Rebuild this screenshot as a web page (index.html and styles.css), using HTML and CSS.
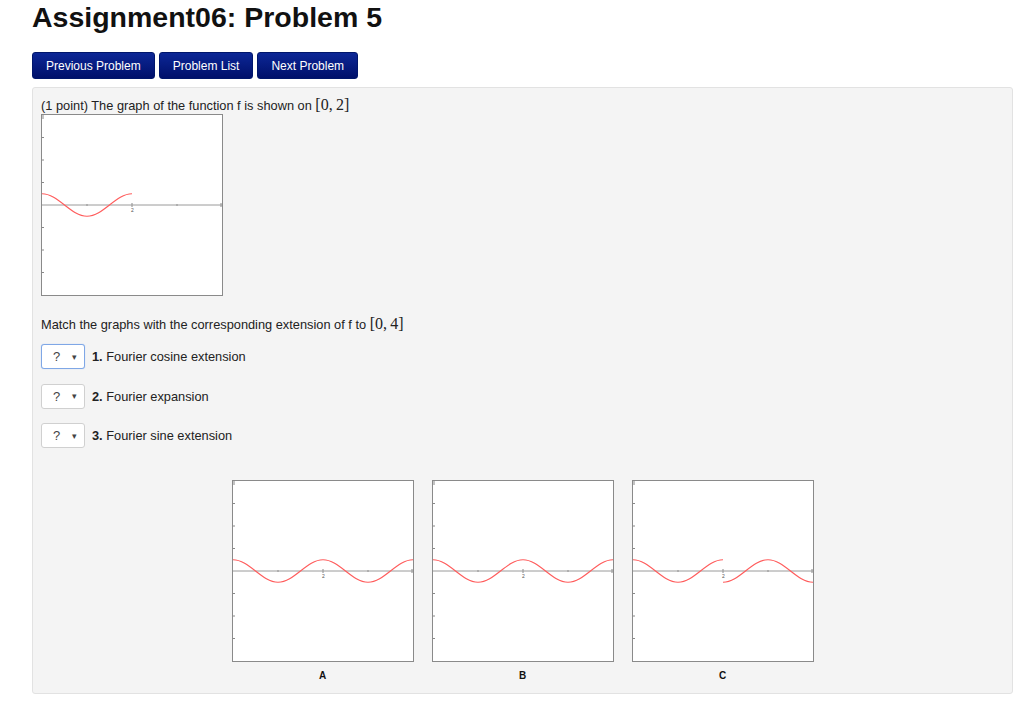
FILE: index.html
```html
<!DOCTYPE html>
<html lang="en">
<head>
    <meta charset="UTF-8">
    <title>Assignment06: Problem 5</title>
    <link rel="stylesheet" href="styles.css">
</head>
<body>
    <h1 class="title">Assignment06: Problem 5</h1>
    <div class="nav">
        <a class="btn" href="#">Previous Problem</a>
        <a class="btn" href="#">Problem List</a>
        <a class="btn" href="#">Next Problem</a>
    </div>
    <div class="problem">
        <p class="line">(1 point) The graph of the function f is shown on <span class="math">[0,&thinsp;2]</span></p>
        <div class="graph">
            <svg width="180" height="180" viewBox="0 0 180 180">
                <g class="ticks">
                    <path d="M0,22.5h2M0,45h2M0,67.5h2M0,112.5h2M0,135h2M0,157.5h2M45,89v2M90,88v4M135,89v2M179,88v4M1,0v4"/>
                </g>
                <line class="axis" x1="0" y1="90" x2="180" y2="90"/>
                <text class="tl" x="89" y="97">2</text>
                <path class="curve" d="M0,78.75 C16.35,78.75 28.65,101.25 45,101.25 S73.65,78.75 90,78.75"/>
            </svg>
        </div>
        <p class="line match">Match the graphs with the corresponding extension of f to <span class="math">[0,&thinsp;4]</span></p>
        <div class="answers">
            <div class="row">
                <span class="sel focus">?<span class="arrow">&#9662;</span></span>
                <span class="label"><b>1.</b> Fourier cosine extension</span>
            </div>
            <div class="row">
                <span class="sel">?<span class="arrow">&#9662;</span></span>
                <span class="label"><b>2.</b> Fourier expansion</span>
            </div>
            <div class="row">
                <span class="sel">?<span class="arrow">&#9662;</span></span>
                <span class="label"><b>3.</b> Fourier sine extension</span>
            </div>
        </div>
        <div class="choices">
            <div class="choice">
                <div class="graph">
                    <svg width="180" height="180" viewBox="0 0 180 180">
                        <g class="ticks">
                            <path d="M0,22.5h2M0,45h2M0,67.5h2M0,112.5h2M0,135h2M0,157.5h2M45,89v2M90,88v4M135,89v2M179,88v4M1,0v4"/>
                        </g>
                        <line class="axis" x1="0" y1="90" x2="180" y2="90"/>
                        <text class="tl" x="89" y="97">2</text>
                        <path class="curve" d="M0,78.75 C16.35,78.75 28.65,101.25 45,101.25 S73.65,78.75 90,78.75 S118.65,101.25 135,101.25 S163.65,78.75 180,78.75"/>
                    </svg>
                </div>
                <div class="letter">A</div>
            </div>
            <div class="choice">
                <div class="graph">
                    <svg width="180" height="180" viewBox="0 0 180 180">
                        <g class="ticks">
                            <path d="M0,22.5h2M0,45h2M0,67.5h2M0,112.5h2M0,135h2M0,157.5h2M45,89v2M90,88v4M135,89v2M179,88v4M1,0v4"/>
                        </g>
                        <line class="axis" x1="0" y1="90" x2="180" y2="90"/>
                        <text class="tl" x="89" y="97">2</text>
                        <path class="curve" d="M0,78.75 C16.35,78.75 28.65,101.25 45,101.25 S73.65,78.75 90,78.75 S118.65,101.25 135,101.25 S163.65,78.75 180,78.75"/>
                    </svg>
                </div>
                <div class="letter">B</div>
            </div>
            <div class="choice">
                <div class="graph">
                    <svg width="180" height="180" viewBox="0 0 180 180">
                        <g class="ticks">
                            <path d="M0,22.5h2M0,45h2M0,67.5h2M0,112.5h2M0,135h2M0,157.5h2M45,89v2M90,88v4M135,89v2M179,88v4M1,0v4"/>
                        </g>
                        <line class="axis" x1="0" y1="90" x2="180" y2="90"/>
                        <text class="tl" x="89" y="97">2</text>
                        <path class="curve" d="M0,78.75 C16.35,78.75 28.65,101.25 45,101.25 S73.65,78.75 90,78.75"/>
                        <path class="curve" d="M90,101.25 C106.35,101.25 118.65,78.75 135,78.75 S163.65,101.25 180,101.25"/>
                    </svg>
                </div>
                <div class="letter">C</div>
            </div>
        </div>
    </div>
</body>
</html>
```

FILE: styles.css
```css
/* Page */
body {
    margin: 0;
    padding: 0 11px 0 32px;
    font-family: 'Liberation Sans', Arial, sans-serif;
    font-size: 12.8px;
    color: #333;
    background: #fff;
}
.title {
    margin: 0;
    padding-top: 1px;
    height: 51px;
    font-size: 28.5px;
    line-height: 32px;
    font-weight: bold;
    color: #111;
}

/* Navigation buttons */
.nav {
    display: flex;
    gap: 4px;
    margin-bottom: 8px;
}
.btn {
    display: block;
    height: 27px;
    line-height: 26px;
    padding: 0 13px;
    box-sizing: border-box;
    border: 1px solid #00166b;
    border-radius: 3px;
    background: linear-gradient(to bottom, #0c2796, #00106a);
    color: #fff;
    font-size: 12px;
    text-decoration: none;
}

/* Problem box */
.problem {
    background: #f4f4f4;
    border: 1px solid #e2e2e2;
    border-radius: 3px;
    padding: 8px 8px 12px 8px;
}
.line {
    margin: 0;
    height: 18px;
    line-height: 18px;
    color: #222;
}
.math {
    font-family: 'Liberation Serif', 'Times New Roman', serif;
    font-size: 16px;
}
.match {
    margin-top: 19px;
    margin-bottom: 11px;
}
.graph {
    width: 180px;
    height: 180px;
    border: 1px solid #8a8a8a;
    background: #fff;
}
.graph svg {
    display: block;
}
.axis {
    stroke: #9a9a9a;
    stroke-width: 1;
}
.ticks path {
    stroke: #888;
    stroke-width: 1;
    fill: none;
}
.tl {
    font-size: 5px;
    fill: #555;
}
.curve {
    fill: none;
    stroke: #ff5c5c;
    stroke-width: 1.2;
}

/* Answer rows */
.answers {
    display: flex;
    flex-direction: column;
    gap: 14.5px;
}
.row {
    display: flex;
    align-items: center;
    gap: 7px;
}
.sel {
    display: flex;
    align-items: center;
    justify-content: space-between;
    width: 44px;
    height: 25px;
    box-sizing: border-box;
    padding: 0 7px 0 11px;
    border: 1px solid #d0d0d0;
    border-radius: 3px;
    background: #fff;
    color: #444;
    font-size: 13px;
}
.sel.focus {
    border-color: #7fa7e6;
    box-shadow: 0 0 1px #9fbff0;
}
.arrow {
    font-size: 9px;
    color: #444;
}
.label {
    color: #222;
}

/* Graph choices */
.choices {
    display: flex;
    justify-content: center;
    gap: 18px;
    margin-top: 32px;
}
.choice {
    display: flex;
    flex-direction: column;
    align-items: center;
}
.letter {
    margin-top: 8px;
    font-size: 10px;
    font-weight: bold;
    color: #111;
}
```
